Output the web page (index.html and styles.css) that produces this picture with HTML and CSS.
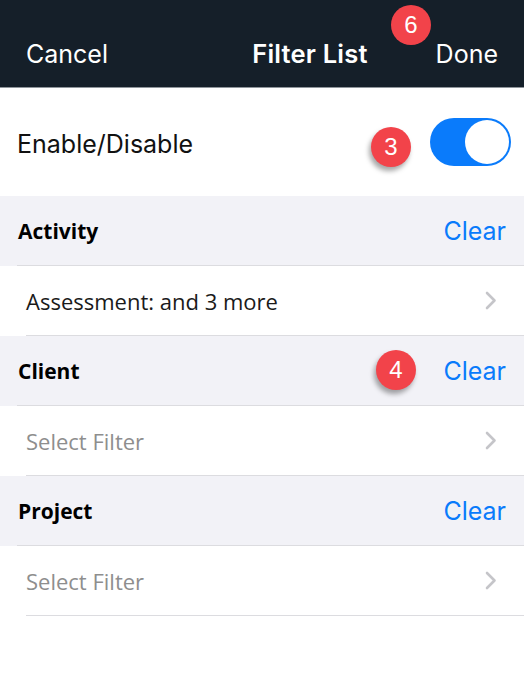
FILE: index.html
```html
<!DOCTYPE html>
<html>
<head>
    <title>Filter List</title>
    <meta charset="utf-8">

    <link rel="stylesheet" href="styles.css">

</head>
<body>
<div class="screen">
    <header class="navbar">
        <span class="nav-btn">Cancel</span>
        <span class="nav-title">Filter List</span>
        <span class="nav-btn nav-done">Done</span>
        <span class="badge badge-done">6</span>
    </header>

    <div class="switch-row">
        <span class="switch-label">Enable/Disable</span>
        <span class="badge badge-switch">3</span>
        <span class="toggle"><span class="knob"></span></span>
    </div>

    <div class="section">
        <div class="section-inner">
            <span class="section-title">Activity</span>
            <span class="clear">Clear</span>
        </div>
    </div>
    <div class="cell">
        <div class="cell-inner">
            <span class="cell-text">Assessment: and 3 more</span>
            <svg class="chevron" width="12" height="19" viewBox="0 0 12 19"><path d="M2 2l7.5 7.5L2 17" fill="none" stroke="#c5c5c9" stroke-width="2.6" stroke-linecap="round" stroke-linejoin="round"/></svg>
        </div>
    </div>

    <div class="section">
        <div class="section-inner">
            <span class="section-title">Client</span>
            <span class="badge badge-client">4</span>
            <span class="clear">Clear</span>
        </div>
    </div>
    <div class="cell">
        <div class="cell-inner">
            <span class="cell-text placeholder">Select Filter</span>
            <svg class="chevron" width="12" height="19" viewBox="0 0 12 19"><path d="M2 2l7.5 7.5L2 17" fill="none" stroke="#c5c5c9" stroke-width="2.6" stroke-linecap="round" stroke-linejoin="round"/></svg>
        </div>
    </div>

    <div class="section">
        <div class="section-inner">
            <span class="section-title">Project</span>
            <span class="clear">Clear</span>
        </div>
    </div>
    <div class="cell">
        <div class="cell-inner">
            <span class="cell-text placeholder">Select Filter</span>
            <svg class="chevron" width="12" height="19" viewBox="0 0 12 19"><path d="M2 2l7.5 7.5L2 17" fill="none" stroke="#c5c5c9" stroke-width="2.6" stroke-linecap="round" stroke-linejoin="round"/></svg>
        </div>
    </div>
</div>
</body>
</html>
```

FILE: styles.css
```css
html,body{
    padding: 0;
    margin: 0;
    background: #fff;
    font-family: Inter, "Liberation Sans", sans-serif;
}

.screen{
    width: 524px;
    height: 679px;
    overflow: hidden;
}

/* top bar */
.navbar{
    position: relative;
    display: flex;
    align-items: center;
    height: 67px;
    padding: 20px 26px 0 26px;
    background: #151f29;
    border-bottom: 1px solid #8f959b;
    color: #fff;
}

.nav-btn{
    font-size: 25px;
}

.nav-title{
    margin-left: auto;
    font-size: 25.5px;
    font-weight: 600;
    letter-spacing: 0.2px;
}

.nav-done{
    margin-left: 68px;
}

/* red number markers */
.badge{
    position: absolute;
    width: 40px;
    height: 40px;
    border-radius: 50%;
    background: #f2434a;
    color: #fff;
    font-family: "Liberation Sans", sans-serif;
    font-size: 24px;
    line-height: 40px;
    text-align: center;
}

.badge-done{
    left: 391px;
    top: 5px;
}

.badge-switch{
    left: 371px;
    top: 39px;
    box-shadow: -2px 4px 5px rgba(0,0,0,0.35);
}

.badge-client{
    left: 359px;
    top: 14px;
    box-shadow: -2px 4px 5px rgba(0,0,0,0.35);
}

/* enable switch */
.switch-row{
    position: relative;
    display: flex;
    align-items: center;
    justify-content: space-between;
    height: 108px;
    padding: 0 13px 0 17px;
}

.switch-label{
    font-size: 25px;
    color: #111;
    margin-top: 3px;
}

.toggle{
    display: flex;
    align-items: center;
    justify-content: flex-end;
    width: 81px;
    height: 48px;
    padding: 0 2px;
    box-sizing: border-box;
    border-radius: 24px;
    background: #0a7bfb;
    margin-top: -1px;
}

.knob{
    width: 44px;
    height: 44px;
    border-radius: 50%;
    background: #fff;
}

/* list sections */
.section{
    padding-left: 17px;
    background: #f2f2f7;
}

.section-inner{
    position: relative;
    display: flex;
    align-items: center;
    justify-content: space-between;
    height: 69px;
    padding-right: 18px;
    border-bottom: 1px solid #dcdce0;
}

.section-title{
    font-family: "Open Sans", sans-serif;
    font-weight: bold;
    font-size: 21px;
    color: #000;
    padding-left: 1px;
}

.clear{
    font-size: 25px;
    color: #0a7bfb;
}

.cell{
    padding-left: 26px;
    background: #fff;
}

.cell-inner{
    display: flex;
    align-items: center;
    justify-content: space-between;
    height: 69px;
    padding-right: 27px;
    border-bottom: 1px solid #dcdce0;
}

.cell-text{
    font-family: "Open Sans", sans-serif;
    font-size: 22px;
    color: #1a1a1a;
}

.placeholder{
    color: #8e8e8e;
}
```
